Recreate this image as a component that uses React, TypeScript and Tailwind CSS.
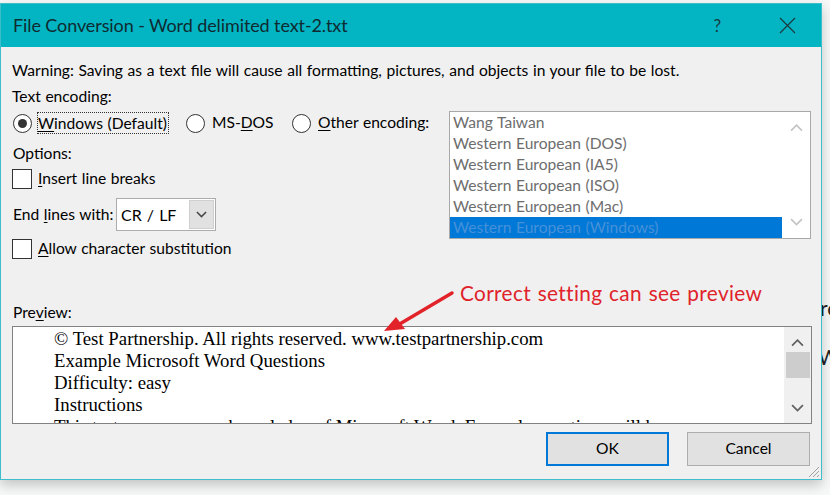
import React from "react";

function Radio({ checked }: { checked?: boolean }) {
  return (
    <span className="w-[19px] h-[19px] shrink-0 rounded-full border border-[#333333] bg-white flex items-center justify-center">
      {checked && <span className="w-[9px] h-[9px] rounded-full bg-[#333333]" />}
    </span>
  );
}

function Check() {
  return <span className="w-[20px] h-[20px] shrink-0 border border-[#333333] bg-white" />;
}

function ChevUp({ color, size = 12 }: { color: string; size?: number }) {
  return (
    <svg width={size} height={size * 0.6} viewBox="0 0 12 7" fill="none">
      <path d="M1 6 L6 1 L11 6" stroke={color} strokeWidth="1.6" />
    </svg>
  );
}
function ChevDown({ color, size = 12 }: { color: string; size?: number }) {
  return (
    <svg width={size} height={size * 0.6} viewBox="0 0 12 7" fill="none">
      <path d="M1 1 L6 6 L11 1" stroke={color} strokeWidth="1.6" />
    </svg>
  );
}

export default function App() {
  const items = [
    "Wang Taiwan",
    "Western European (DOS)",
    "Western European (IA5)",
    "Western European (ISO)",
    "Western European (Mac)",
  ];
  return (
    <div className="w-[830px] h-[495px] bg-[#f7f8f8] relative overflow-hidden font-[family-name:Lato,'Noto_Sans',sans-serif] text-black">
      {/* background fragments behind the dialog */}
      <span className="absolute left-[820px] top-[297px] text-[21px] leading-none text-[#222]">ro</span>
      <span className="absolute left-[818px] top-[346px] text-[21px] leading-none text-[#222]">W</span>

      <div className="pt-[3px]">
        <div className="w-[822px] h-[477px] border border-[#3dbfcb] bg-[#f0f0f0] flex flex-col shadow-[0_5px_12px_rgba(0,0,0,0.22)] relative">
          {/* title bar */}
          <div className="h-[43px] bg-[#03b4c2] flex items-center pl-[12px] shrink-0">
            <span className="text-[18px] text-[#0f2b31] tracking-[-0.1px]">File Conversion - Word delimited text-2.txt</span>
            <span className="ml-auto mr-[58px] text-[17px] text-[#1a3a40]">?</span>
            <svg width="17" height="17" viewBox="0 0 17 17" className="mr-[25px]">
              <path d="M1 1 L16 16 M16 1 L1 16" stroke="#1a3a40" strokeWidth="1.2" />
            </svg>
          </div>

          {/* body */}
          <div className="flex flex-col pl-[11px] pr-[10px] text-[15.6px] [word-spacing:0.6px]">
            <div className="mt-[13px] h-[20px] leading-[20px] whitespace-nowrap">
              Warning: Saving as a text file will cause all formatting, pictures, and objects in your file to be lost.
            </div>
            <div className="mt-[6px] h-[20px] leading-[20px]">Text encoding:</div>

            <div className="mt-[5px] flex">
              <div className="w-[437px] flex flex-col">
                <div className="h-[24px] flex items-center">
                  <span className="ml-[1px]"><Radio checked /></span>
                  <span className="ml-[5px] w-[132px] h-[22px] leading-[20px] border border-dotted border-[#333] flex items-center whitespace-nowrap">
                    <span><span className="underline underline-offset-2">W</span>indows (Default)</span>
                  </span>
                  <span className="ml-[17px]"><Radio /></span>
                  <span className="ml-[7px] w-[62px] whitespace-nowrap">MS-<span className="underline underline-offset-2">D</span>OS</span>
                  <span className="ml-[18px]"><Radio /></span>
                  <span className="ml-[7px] whitespace-nowrap"><span className="underline underline-offset-2">O</span>ther encoding:</span>
                </div>
                <div className="mt-[8px] h-[20px] leading-[20px] ml-[1px]">Options:</div>
                <div className="mt-[6px] h-[20px] flex items-center">
                  <Check />
                  <span className="ml-[6px]"><span className="underline underline-offset-2">I</span>nsert line breaks</span>
                </div>
                <div className="mt-[9px] h-[33px] flex items-center">
                  <span className="ml-[1px] w-[103px] whitespace-nowrap">End <span className="underline underline-offset-2">l</span>ines with:</span>
                  <div className="w-[100px] h-[33px] border border-[#acacac] bg-white flex items-center">
                    <span className="ml-[4px] text-[16px] [word-spacing:1px]">CR / LF</span>
                    <span className="ml-auto mr-[1px] w-[25px] h-[29px] bg-[#e1e1e1] border border-[#cfcfcf] flex items-center justify-center">
                      <ChevDown color="#444" size={11} />
                    </span>
                  </div>
                </div>
                <div className="mt-[8px] h-[20px] flex items-center">
                  <Check />
                  <span className="ml-[6px]"><span className="underline underline-offset-2">A</span>llow character substitution</span>
                </div>
              </div>

              {/* encoding listbox */}
              <div className="w-[362px] h-[128px] border border-[#a8a8a8] bg-white flex">
                <div className="w-[332px] flex flex-col">
                  {items.map((t) => (
                    <div key={t} className="h-[21px] leading-[21px] pl-[3px] text-[#6d6d6d] whitespace-nowrap">{t}</div>
                  ))}
                  <div className="h-[21px] leading-[21px] pl-[3px] bg-[#0078d7] text-[#4791d8] whitespace-nowrap">Western European (Windows)</div>
                </div>
                <div className="flex-1 flex flex-col items-center justify-between py-[12px]">
                  <ChevUp color="#c4c4c4" size={13} />
                  <ChevDown color="#c4c4c4" size={13} />
                </div>
              </div>
            </div>

            <div className="mt-[43px] h-[20px] leading-[20px] ml-[1px]">
              Pre<span className="underline underline-offset-2">v</span>iew:
            </div>
            <div className="mt-[4px] w-[800px] h-[98px] border border-[#828282] bg-white flex overflow-hidden [word-spacing:0px]">
              <div className="flex-1 pt-[1px] pl-[41px] font-[family-name:'Liberation_Serif',serif] text-[18.8px] leading-[22px] whitespace-nowrap overflow-hidden">
                <div>© Test Partnership. All rights reserved. www.testpartnership.com</div>
                <div>Example Microsoft Word Questions</div>
                <div>Difficulty: easy</div>
                <div>Instructions</div>
                <div>This test assesses your knowledge of Microsoft Word. Example questions will be</div>
              </div>
              <div className="w-[27px] bg-[#f0f0f0] flex flex-col items-center">
                <div className="mt-[12px]"><ChevUp color="#606060" size={13} /></div>
                <div className="mt-[5px] w-[24px] h-[26px] bg-[#cdcdcd]" />
                <div className="mt-[26px]"><ChevDown color="#606060" size={13} /></div>
              </div>
            </div>

            <div className="mt-[8px] flex justify-end pr-[1px] gap-[18px] [word-spacing:0px]">
              <div className="w-[123px] h-[34px] bg-[#e1e1e1] border-2 border-[#0078d7] flex items-center justify-center">OK</div>
              <div className="w-[123px] h-[34px] bg-[#e1e1e1] border border-[#adadad] flex items-center justify-center">Cancel</div>
            </div>
          </div>

          {/* resize grip */}
          <svg width="13" height="13" viewBox="0 0 13 13" className="absolute right-[1px] bottom-[1px]">
            <path d="M12 2 L2 12 M12 6 L6 12 M12 10 L10 12" stroke="#a0a0a0" strokeWidth="1" />
          </svg>

          {/* annotation overlay */}
          <svg width="90" height="50" viewBox="0 0 90 50" className="absolute left-[375px] top-[283px]">
            <path d="M76 6 L22 38" stroke="#e2232a" strokeWidth="3.5" strokeLinecap="round" />
            <path d="M8 44 L20 30 L29 42 Z" fill="#e2232a" />
          </svg>
          <span className="absolute left-[459px] top-[279px] text-[20.8px] leading-none [word-spacing:1px] tracking-[0.35px] text-[#e0222b] whitespace-nowrap font-[family-name:Lato,sans-serif]">
            Correct setting can see preview
          </span>
        </div>
      </div>
    </div>
  );
}
